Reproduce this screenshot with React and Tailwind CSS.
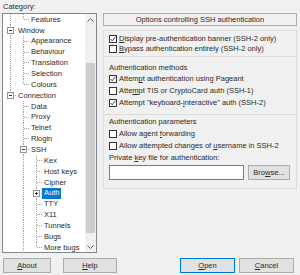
import React from 'react'

const rows = [
  { label: 'Features', depth: 1, anc: [true], last: true },
  { label: 'Window', depth: 0, anc: [], last: false, exp: '-' },
  { label: 'Appearance', depth: 1, anc: [true], last: false },
  { label: 'Behaviour', depth: 1, anc: [true], last: false },
  { label: 'Translation', depth: 1, anc: [true], last: false },
  { label: 'Selection', depth: 1, anc: [true], last: false },
  { label: 'Colours', depth: 1, anc: [true], last: true },
  { label: 'Connection', depth: 0, anc: [], last: true, exp: '-' },
  { label: 'Data', depth: 1, anc: [false], last: false },
  { label: 'Proxy', depth: 1, anc: [false], last: false },
  { label: 'Telnet', depth: 1, anc: [false], last: false },
  { label: 'Rlogin', depth: 1, anc: [false], last: false },
  { label: 'SSH', depth: 1, anc: [false], last: false, exp: '-' },
  { label: 'Kex', depth: 2, anc: [false, true], last: false },
  { label: 'Host keys', depth: 2, anc: [false, true], last: false },
  { label: 'Cipher', depth: 2, anc: [false, true], last: false },
  { label: 'Auth', depth: 2, anc: [false, true], last: false, exp: '+', selected: true },
  { label: 'TTY', depth: 2, anc: [false, true], last: false },
  { label: 'X11', depth: 2, anc: [false, true], last: false },
  { label: 'Tunnels', depth: 2, anc: [false, true], last: false },
  { label: 'Bugs', depth: 2, anc: [false, true], last: false },
  { label: 'More bugs', depth: 2, anc: [false, true], last: true },
]

const dot = { stroke: '#a0a0a0', strokeWidth: 1, strokeDasharray: '1 1' }

// one indent column of the tree, 13px wide
function Cell({ vertical, own, last, exp }) {
  return (
    <svg width="13" height="11" className="shrink-0 overflow-visible">
      {vertical && <line x1="7.5" y1="0" x2="7.5" y2="11" style={dot} />}
      {own && <line x1="7.5" y1="0" x2="7.5" y2={last ? 5.5 : 11} style={dot} />}
      {own && <line x1="8" y1="5.5" x2="13" y2="5.5" style={dot} />}
      {exp && (
        <g>
          <rect x="4.5" y="2.5" width="6" height="6" fill="#fff" stroke="#919191" />
          <line x1="6" y1="5.5" x2="9" y2="5.5" stroke="#333" />
          {exp === '+' && <line x1="7.5" y1="4" x2="7.5" y2="7" stroke="#333" />}
        </g>
      )}
    </svg>
  )
}

function TreeRow({ row }) {
  return (
    <div className="flex items-center h-[10.86px] whitespace-nowrap">
      {row.anc.map((v, i) => (
        <Cell key={i} vertical={v} />
      ))}
      <Cell own last={row.last} exp={row.exp} />
      <span
        className={`px-[2px] h-full flex items-center ${row.selected ? 'bg-[#0078d7] text-white' : ''}`}
      >
        {row.label}
      </span>
    </div>
  )
}

function Chevron({ up }) {
  return (
    <svg width="7" height="4" viewBox="0 0 7 4">
      <polyline
        points={up ? '0.5,3.5 3.5,0.5 6.5,3.5' : '0.5,0.5 3.5,3.5 6.5,0.5'}
        fill="none"
        stroke="#606060"
        strokeWidth="1"
      />
    </svg>
  )
}

function Check({ checked, children, h = 'h-[12px]' }) {
  return (
    <div className={`flex items-center ${h} pl-[5px] whitespace-nowrap`}>
      <span className="w-[8px] h-[8px] border border-[#333] bg-white flex items-center justify-center shrink-0">
        {checked && (
          <svg width="6" height="6" viewBox="0 0 6 6">
            <polyline points="0.5,3 2.2,4.8 5.5,0.8" fill="none" stroke="#222" strokeWidth="0.9" />
          </svg>
        )}
      </span>
      <span className="ml-[2px]">{children}</span>
    </div>
  )
}

function Button({ children, className = '', primary }) {
  return (
    <div
      className={`h-[15px] flex items-center justify-center bg-[#e1e1e1] border ${
        primary ? 'border-[#0078d7]' : 'border-[#adadad]'
      } ${className}`}
    >
      <span>{children}</span>
    </div>
  )
}

export default function App() {
  return (
    <div className="w-[300px] h-[275px] bg-[#f0f0f0] overflow-hidden text-[7.5px] text-[#2a2a2a] font-['Liberation_Sans',Arial,sans-serif] leading-none">
      <div className="flex h-[258px]">
        {/* Category tree */}
        <div className="w-[97px] pl-[2px] pt-[1px] shrink-0">
          <div className="h-[12px] pl-[1px] flex items-center">Category:</div>
          <div className="h-[240px] border border-[#828790] bg-white flex">
            <div className="flex-1">
              {rows.map((r) => (
                <TreeRow key={r.label} row={r} />
              ))}
            </div>
            <div className="w-[11px] bg-[#f0f0f0] flex flex-col">
              <div className="h-[11px] flex items-center justify-center">
                <Chevron up />
              </div>
              <div className="flex-1 px-[1px] pt-[38px] pb-[8px] flex flex-col">
                <div className="flex-1 bg-[#cdcdcd]" />
              </div>
              <div className="h-[11px] flex items-center justify-center">
                <Chevron />
              </div>
            </div>
          </div>
        </div>

        {/* Options panel */}
        <div className="flex-1 pl-[6px] pr-[3px] pt-[13px]">
          <div className="h-[13px] border border-[#adadad] flex items-center justify-center">
            Options controlling SSH authentication
          </div>
          <div className="mt-[4px] h-[27px] border border-[#dcdcdc] pt-[3px]">
            <Check checked h="h-[10px]">
              <u>D</u>isplay pre-authentication banner (SSH-2 only)
            </Check>
            <Check h="h-[10px]">
              <u>B</u>ypass authentication entirely (SSH-2 only)
            </Check>
          </div>
          <div className="h-[58px] border border-t-0 border-[#dcdcdc] pt-[5px]">
            <div className="h-[11px] pl-[5px] flex items-center">Authentication methods</div>
            <Check checked>
              Attem<u>p</u>t authentication using Pageant
            </Check>
            <Check>
              Atte<u>m</u>pt TIS or CryptoCard auth (SSH-1)
            </Check>
            <Check checked>
              Attempt "keyboard-<u>i</u>nteractive" auth (SSH-2)
            </Check>
          </div>
          <div className="h-[74px] border border-t-0 border-[#dcdcdc] pt-[1px]">
            <div className="h-[12px] pl-[5px] flex items-center">Authentication parameters</div>
            <Check>
              Allow agent <u>f</u>orwarding
            </Check>
            <Check>
              Allow attempted changes of <u>u</u>sername in SSH-2
            </Check>
            <div className="h-[12px] pl-[5px] flex items-center">
              <span>
                Private <u>k</u>ey file for authentication:
              </span>
            </div>
            <div className="flex items-center pl-[5px] mt-[1px]">
              <div className="w-[135px] h-[15px] bg-white border border-[#7a7a7a]" />
              <Button className="ml-[4px] w-[42px]">
                Bro<u>w</u>se...
              </Button>
            </div>
          </div>
        </div>
      </div>

      {/* Buttons */}
      <div className="flex items-center">
        <Button className="ml-[3px] w-[48px]">
          <u>A</u>bout
        </Button>
        <Button className="ml-[12px] w-[54px]">
          <u>H</u>elp
        </Button>
        <Button primary className="ml-auto w-[55px]">
          <u>O</u>pen
        </Button>
        <Button className="ml-[4px] mr-[6px] w-[55px]">
          <u>C</u>ancel
        </Button>
      </div>
    </div>
  )
}
